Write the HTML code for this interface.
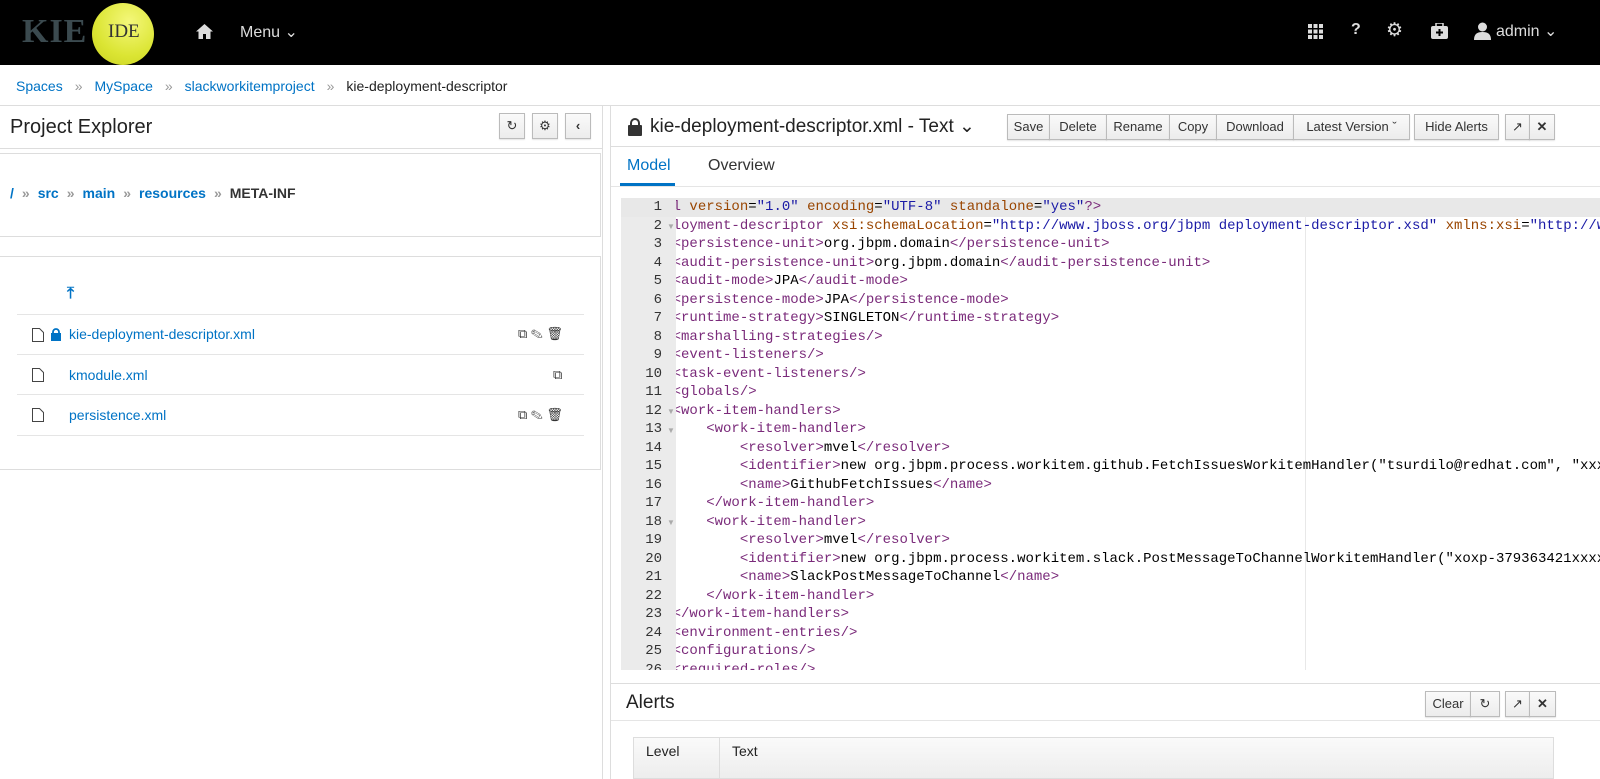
<!DOCTYPE html>
<html><head><meta charset="utf-8"><style>
*{box-sizing:border-box;margin:0;padding:0}
body{width:1600px;height:779px;overflow:hidden;font-family:"Liberation Sans",sans-serif;background:#fff;position:relative;color:#333}
.abs{position:absolute}
.nav{left:0;top:0;width:1600px;height:65px;background:#000}
.nav .t{color:#ddd;font-size:16px}
.bc{top:65px;left:0;width:1600px;height:41px;border-bottom:1px solid #ddd;font-size:14px}
a,.lnk{color:#0073c5;text-decoration:none}
.sep{color:#999;margin:0 12px}
.btn{position:absolute;height:26px;border:1px solid #bbb;background:linear-gradient(#fafafa,#ececec);font-size:13px;color:#333;line-height:24px;text-align:center;box-shadow:0 1px 1px rgba(0,0,0,.1)}
.code{font-family:"Liberation Mono",monospace;font-size:14px;line-height:18.5px;white-space:pre}
.tg{color:#7a2a7a}.at{color:#994500}.st{color:#1a1aa6}
.fa{position:absolute;left:667px;color:#aaa;font-size:8px}
</style></head><body>
<div class="abs nav">
 <div class="abs" style="left:22px;top:15px;font-family:'Liberation Serif',serif;font-size:34px;font-weight:bold;color:#3b4a4f;letter-spacing:1px;line-height:34px">KIE</div>
 <div class="abs" style="left:92px;top:3px;width:62px;height:62px;border-radius:50%;background:radial-gradient(circle at 60% 30%,#f4f77a,#dbe533 60%,#c8d020);"></div>
 <div class="abs" style="left:108px;top:21px;font-family:'Liberation Serif',serif;font-size:19px;color:#333">IDE</div>
 <svg class="abs" style="left:196px;top:24px" width="17" height="15" viewBox="0 0 17 15"><path d="M8.5 0L0 7.5h2.5V15h4.5v-5h3v5h4.5V7.5H17z" fill="#ddd"/></svg>
 <div class="abs t" style="left:240px;top:22px">Menu &#8964;</div>
 <svg class="abs" style="left:1308px;top:24px" width="15" height="15"><g fill="#ddd"><rect x="0" y="0" width="4" height="4"/><rect x="5.5" y="0" width="4" height="4"/><rect x="11" y="0" width="4" height="4"/><rect x="0" y="5.5" width="4" height="4"/><rect x="5.5" y="5.5" width="4" height="4"/><rect x="11" y="5.5" width="4" height="4"/><rect x="0" y="11" width="4" height="4"/><rect x="5.5" y="11" width="4" height="4"/><rect x="11" y="11" width="4" height="4"/></g></svg>
 <div class="abs t" style="left:1351px;top:21px;font-weight:bold;font-size:16px">?</div>
 <div class="abs t" style="left:1386px;top:19px;font-size:19px">&#9881;</div>
 <svg class="abs" style="left:1431px;top:23px" width="17" height="16"><rect x="0" y="3" width="17" height="13" rx="2" fill="#ddd"/><rect x="5" y="0" width="7" height="4" fill="none" stroke="#ddd" stroke-width="1.5"/><path d="M7.5 6h2v2.5H12v2H9.5V13h-2v-2.5H5v-2h2.5z" fill="#000"/></svg>
 <svg class="abs" style="left:1474px;top:22px" width="17" height="18"><circle cx="8.5" cy="5" r="4.5" fill="#ddd"/><path d="M0 18c0-6 3-8 8.5-8s8.5 2 8.5 8z" fill="#ddd"/></svg>
 <div class="abs t" style="left:1496px;top:21px">admin &#8964;</div>
</div>
<div class="abs bc"><div class="abs" style="left:16px;top:13px;white-space:nowrap"><a>Spaces</a><span class="sep">&raquo;</span><a>MySpace</a><span class="sep">&raquo;</span><a>slackworkitemproject</a><span class="sep">&raquo;</span><span style="color:#222">kie-deployment-descriptor</span></div></div>

<!-- left -->
<div class="abs" style="left:0;top:106px;width:603px;height:673px;border-right:1px solid #ddd"></div>
<div class="abs" style="left:0;top:148px;width:603px;border-top:1px solid #ddd"></div>
<div class="abs" style="left:10px;top:116px;font-size:20px;color:#222">Project Explorer</div>
<div class="btn" style="left:499px;top:113px;width:26px">&#8635;</div>
<div class="btn" style="left:532px;top:113px;width:26px">&#9881;</div>
<div class="btn" style="left:565px;top:113px;width:26px;font-weight:bold">&lsaquo;</div>
<div class="abs" style="left:0;top:153px;width:601px;height:84px;border:1px solid #ddd;border-left:none"></div>
<div class="abs" style="left:10px;top:185px;font-size:14px;font-weight:bold;white-space:nowrap"><a>/</a><span class="sep" style="margin:0 8px">&raquo;</span><a>src</a><span class="sep" style="margin:0 8px">&raquo;</span><a>main</a><span class="sep" style="margin:0 8px">&raquo;</span><a>resources</a><span class="sep" style="margin:0 8px">&raquo;</span><span style="color:#333">META-INF</span></div>
<div class="abs" style="left:0;top:256px;width:601px;height:214px;border:1px solid #ddd;border-left:none"></div>
<div class="abs lnk" style="left:67px;top:285px;font-size:16px;font-weight:bold">&#10514;</div>
<div class="abs" style="left:17px;top:314px;width:567px;border-top:1px solid #e5e5e5"></div>
<div class="abs" style="left:17px;top:354px;width:567px;border-top:1px solid #e5e5e5"></div>
<div class="abs" style="left:17px;top:394px;width:567px;border-top:1px solid #e5e5e5"></div>
<div class="abs" style="left:17px;top:435px;width:567px;border-top:1px solid #e5e5e5"></div>
<svg class="abs" style="left:32px;top:328px" width="12" height="14"><path d="M.5.5h7l4 4v9H.5z" fill="none" stroke="#444"/></svg>
<svg class="abs" style="left:32px;top:368px" width="12" height="14"><path d="M.5.5h7l4 4v9H.5z" fill="none" stroke="#444"/></svg>
<svg class="abs" style="left:32px;top:408px" width="12" height="14"><path d="M.5.5h7l4 4v9H.5z" fill="none" stroke="#444"/></svg>
<svg class="abs" style="left:51px;top:328px" width="10" height="13"><rect x="0" y="5" width="10" height="8" fill="#0073c5"/><path d="M2 6V4a3 3 0 0 1 6 0v2" stroke="#0073c5" stroke-width="1.8" fill="none"/></svg>
<div class="abs lnk" style="left:69px;top:326px;font-size:14px">kie-deployment-descriptor.xml</div>
<div class="abs lnk" style="left:69px;top:367px;font-size:14px">kmodule.xml</div>
<div class="abs lnk" style="left:69px;top:407px;font-size:14px">persistence.xml</div>
<div class="abs" style="left:518px;top:326px;font-size:13px;color:#333">&#10697; &#9998; &#128465;</div>
<div class="abs" style="left:553px;top:367px;font-size:13px;color:#333">&#10697;</div>
<div class="abs" style="left:518px;top:407px;font-size:13px;color:#333">&#10697; &#9998; &#128465;</div>

<!-- right -->
<div class="abs" style="left:610px;top:106px;width:1px;height:673px;background:#ddd"></div>
<div class="abs" style="left:611px;top:146px;width:989px;border-top:1px solid #ddd"></div>
<svg class="abs" style="left:628px;top:118px" width="14" height="18"><rect x="0" y="7" width="14" height="11" rx="1" fill="#333"/><path d="M3 8V5a4 4 0 0 1 8 0v3" stroke="#333" stroke-width="2" fill="none"/></svg>
<div class="abs" style="left:650px;top:115px;font-size:19px;color:#222">kie-deployment-descriptor.xml - Text &#8964;</div>
<div class="btn" style="left:1007px;top:114px;width:43px">Save</div>
<div class="btn" style="left:1049px;top:114px;width:58px">Delete</div>
<div class="btn" style="left:1106px;top:114px;width:64px">Rename</div>
<div class="btn" style="left:1169px;top:114px;width:48px">Copy</div>
<div class="btn" style="left:1216px;top:114px;width:78px">Download</div>
<div class="btn" style="left:1293px;top:114px;width:117px">Latest Version &#711;</div>
<div class="btn" style="left:1414px;top:114px;width:85px">Hide Alerts</div>
<div class="btn" style="left:1505px;top:114px;width:25px">&#8599;</div>
<div class="btn" style="left:1529px;top:114px;width:26px;font-weight:bold">&#10005;</div>
<div class="abs" style="left:627px;top:157px;font-size:16px;color:#0073c5">Model</div>
<div class="abs" style="left:620px;top:183px;width:55px;height:3px;background:#0073c5"></div>
<div class="abs" style="left:708px;top:157px;font-size:16px;color:#333">Overview</div>
<div class="abs" style="left:611px;top:186px;width:989px;border-top:1px solid #e5e5e5"></div>

<div class="abs" style="left:621px;top:198px;width:55px;height:472px;background:#ebebeb"></div>
<div class="abs" style="left:621px;top:198px;width:980px;height:18.5px;background:#e8e8e8"></div>
<div class="abs" style="left:1305px;top:198px;width:1px;height:472px;background:#e8e8e8"></div>
<div class="abs code" style="left:621px;top:198px;width:55px;height:472px;overflow:hidden;text-align:right;padding-right:14px;color:#333">1
2
3
4
5
6
7
8
9
10
11
12
13
14
15
16
17
18
19
20
21
22
23
24
25
26</div>
<div class="fa" style="top:222px">&#9660;</div>
<div class="fa" style="top:407px">&#9660;</div>
<div class="fa" style="top:426px">&#9660;</div>
<div class="fa" style="top:518px">&#9660;</div>
<div class="abs" style="left:676px;top:198px;width:924px;height:472px;overflow:hidden">
<div class="abs code" style="left:-37px;top:0;color:#000"><span class="tg">&lt;?xml</span> <span class="at">version</span>=<span class="st">"1.0"</span> <span class="at">encoding</span>=<span class="st">"UTF-8"</span> <span class="at">standalone</span>=<span class="st">"yes"</span><span class="tg">?&gt;</span>
<span class="tg">&lt;deployment-descriptor</span> <span class="at">xsi:schemaLocation</span>=<span class="st">"http://www.jboss.org/jbpm deployment-descriptor.xsd"</span> <span class="at">xmlns:xsi</span>=<span class="st">"http://www.w3.org</span>
    <span class="tg">&lt;persistence-unit&gt;</span>org.jbpm.domain<span class="tg">&lt;/persistence-unit&gt;</span>
    <span class="tg">&lt;audit-persistence-unit&gt;</span>org.jbpm.domain<span class="tg">&lt;/audit-persistence-unit&gt;</span>
    <span class="tg">&lt;audit-mode&gt;</span>JPA<span class="tg">&lt;/audit-mode&gt;</span>
    <span class="tg">&lt;persistence-mode&gt;</span>JPA<span class="tg">&lt;/persistence-mode&gt;</span>
    <span class="tg">&lt;runtime-strategy&gt;</span>SINGLETON<span class="tg">&lt;/runtime-strategy&gt;</span>
    <span class="tg">&lt;marshalling-strategies/&gt;</span>
    <span class="tg">&lt;event-listeners/&gt;</span>
    <span class="tg">&lt;task-event-listeners/&gt;</span>
    <span class="tg">&lt;globals/&gt;</span>
    <span class="tg">&lt;work-item-handlers&gt;</span>
        <span class="tg">&lt;work-item-handler&gt;</span>
            <span class="tg">&lt;resolver&gt;</span>mvel<span class="tg">&lt;/resolver&gt;</span>
            <span class="tg">&lt;identifier&gt;</span>new org.jbpm.process.workitem.github.FetchIssuesWorkitemHandler("tsurdilo@redhat.com", "xxx")
            <span class="tg">&lt;name&gt;</span>GithubFetchIssues<span class="tg">&lt;/name&gt;</span>
        <span class="tg">&lt;/work-item-handler&gt;</span>
        <span class="tg">&lt;work-item-handler&gt;</span>
            <span class="tg">&lt;resolver&gt;</span>mvel<span class="tg">&lt;/resolver&gt;</span>
            <span class="tg">&lt;identifier&gt;</span>new org.jbpm.process.workitem.slack.PostMessageToChannelWorkitemHandler("xoxp-379363421xxxx")
            <span class="tg">&lt;name&gt;</span>SlackPostMessageToChannel<span class="tg">&lt;/name&gt;</span>
        <span class="tg">&lt;/work-item-handler&gt;</span>
    <span class="tg">&lt;/work-item-handlers&gt;</span>
    <span class="tg">&lt;environment-entries/&gt;</span>
    <span class="tg">&lt;configurations/&gt;</span>
    <span class="tg">&lt;required-roles/&gt;</span></div>
</div>

<div class="abs" style="left:611px;top:683px;width:989px;border-top:1px solid #ddd"></div>
<div class="abs" style="left:611px;top:720px;width:989px;border-top:1px solid #e5e5e5"></div>
<div class="abs" style="left:626px;top:692px;font-size:19px;color:#222">Alerts</div>
<div class="btn" style="left:1425px;top:691px;width:46px">Clear</div>
<div class="btn" style="left:1470px;top:691px;width:30px">&#8635;</div>
<div class="btn" style="left:1505px;top:691px;width:25px">&#8599;</div>
<div class="btn" style="left:1529px;top:691px;width:27px;font-weight:bold">&#10005;</div>
<div class="abs" style="left:633px;top:737px;width:921px;height:42px;border:1px solid #ddd;background:linear-gradient(#fafafa,#ededed)"></div>
<div class="abs" style="left:719px;top:737px;width:1px;height:42px;background:#ddd"></div>
<div class="abs" style="left:646px;top:743px;font-size:14px;color:#222">Level</div>
<div class="abs" style="left:732px;top:743px;font-size:14px;color:#222">Text</div>
</body></html>
